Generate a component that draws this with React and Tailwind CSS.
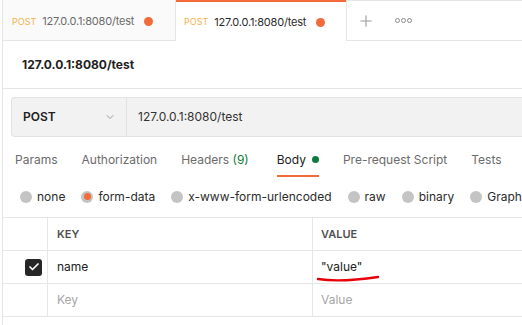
import { ChevronDown, Plus, Check } from "lucide-react";

const tabs = [
  { label: "Params" },
  { label: "Authorization" },
  { label: "Headers", count: "(9)" },
  { label: "Body", active: true },
  { label: "Pre-request Script" },
  { label: "Tests" },
];

const bodyTypes = [
  { label: "none" },
  { label: "form-data", checked: true },
  { label: "x-www-form-urlencoded" },
  { label: "raw" },
  { label: "binary" },
  { label: "GraphQL" },
];

function Radio({ checked }) {
  return (
    <span className="flex h-[12px] w-[12px] shrink-0 items-center justify-center rounded-full bg-[#c4c4c4]">
      {checked && <span className="h-[7px] w-[7px] rounded-full bg-[#f26b3a]" />}
    </span>
  );
}

function RequestTab({ active }) {
  return (
    <div
      className={`flex h-full items-center ${
        active
          ? "w-[170px] border-t-2 border-[#f26b3a] bg-white pt-[1px] pl-[8px]"
          : "w-[173px] border-r border-b border-[#e6e6e6] bg-[#fafafa] pt-[3px] pl-[9px]"
      }`}
    >
      <span className="text-[9px] text-[#f5b14c]">POST</span>
      <span
        className={`ml-[6px] text-[11px] tracking-[-0.2px] ${
          active ? "text-[#2b2b2b]" : "text-[#6b6b6b]"
        }`}
      >
        127.0.0.1:8080/test
      </span>
      <span className="ml-[10px] h-[9px] w-[9px] rounded-full bg-[#f26b3a]" />
    </div>
  );
}

export default function App() {
  return (
    <div
      className="relative h-[325px] w-[522px] overflow-hidden bg-white"
      style={{ fontFamily: "Inter, 'Noto Sans', sans-serif" }}
    >
      <div className="ml-[2px] h-full border-l border-[#e6e6e6]">
        {/* open request tabs */}
        <div className="flex h-[41px]">
          <RequestTab />
          <RequestTab active />
          <div className="flex flex-1 items-center gap-[20px] border-y border-l border-[#e6e6e6] pl-[10px]">
            <Plus className="h-[18px] w-[18px] text-[#9a9a9a]" strokeWidth={1.5} />
            <span className="flex gap-[1px]">
              <span className="h-[5px] w-[5px] rounded-full border border-[#8a8a8a]" />
              <span className="h-[5px] w-[5px] rounded-full border border-[#8a8a8a]" />
              <span className="h-[5px] w-[5px] rounded-full border border-[#8a8a8a]" />
            </span>
          </div>
        </div>

        {/* request name */}
        <div className="flex h-[48px] items-center border-b border-[#e6e6e6] pl-[19px]">
          <span className="text-[12px] font-bold text-[#212121]">127.0.0.1:8080/test</span>
        </div>

        {/* url bar */}
        <div className="mt-[8px] ml-[8px] flex h-[40px] rounded-l-[4px] border border-r-0 border-[#e2e2e2] bg-[#f2f2f2]">
          <div className="flex w-[115px] items-center justify-between border-r border-[#e2e2e2] pr-[10px] pl-[11px]">
            <span className="text-[12px] font-semibold text-[#212121]">POST</span>
            <ChevronDown className="h-[12px] w-[12px] text-[#808080]" strokeWidth={1.5} />
          </div>
          <div className="flex items-center pl-[11px] text-[12px] text-[#333333]">127.0.0.1:8080/test</div>
        </div>

        {/* request tabs */}
        <div className="mt-[6px] flex h-[33px] items-stretch gap-[24px] pl-[12px]">
          {tabs.map((t) => (
            <div key={t.label} className={`relative flex items-center ${t.active ? "ml-[4px]" : ""}`}>
              <span className={`text-[12px] ${t.active ? "text-[#212121]" : "text-[#6b6b6b]"}`}>
                {t.label}
                {t.count && <span className="text-[#0f7b3b]"> {t.count}</span>}
              </span>
              {t.active && (
                <>
                  <span className="ml-[6px] h-[7px] w-[7px] rounded-full bg-[#0f7b3b]" />
                  <span className="absolute bottom-[-1px] left-0 h-[2px] w-[42px] bg-[#f26b3a]" />
                </>
              )}
            </div>
          ))}
        </div>

        {/* body type */}
        <div className="flex h-[41px] items-center pl-[17px] text-[12px] text-[#2b2b2b]">
          {bodyTypes.map((b) => (
            <div key={b.label} className="mr-[16px] flex shrink-0 items-center gap-[5px]">
              <Radio checked={b.checked} />
              <span>{b.label}</span>
            </div>
          ))}
        </div>

        {/* params table */}
        <div className="border-t border-[#e6e6e6] text-[12px]">
          <div className="flex h-[33px] border-b border-[#e6e6e6]">
            <div className="w-[45px] border-r border-[#e6e6e6]" />
            <div className="flex w-[265px] items-center border-r border-[#e6e6e6] pl-[9px] text-[11px] font-semibold text-[#505050]">
              KEY
            </div>
            <div className="flex items-center pl-[8px] text-[11px] font-semibold text-[#505050]">VALUE</div>
          </div>
          <div className="flex h-[33px] border-b border-[#e6e6e6]">
            <div className="flex w-[45px] items-center justify-end border-r border-[#e6e6e6] pr-[5px]">
              <span className="flex h-[17px] w-[17px] items-center justify-center rounded-[3px] bg-[#262626]">
                <Check className="h-[12px] w-[12px] text-white" strokeWidth={3.5} />
              </span>
            </div>
            <div className="flex w-[265px] items-center border-r border-[#e6e6e6] pl-[9px] text-[#212121]">name</div>
            <div className="flex items-center pl-[8px] text-[#212121]">"value"</div>
          </div>
          <div className="flex h-[33px] border-b border-[#e6e6e6]">
            <div className="w-[45px] border-r border-[#e6e6e6]" />
            <div className="flex w-[265px] items-center border-r border-[#e6e6e6] pl-[9px] text-[#a6a6a6]">Key</div>
            <div className="flex items-center pl-[8px] text-[#a6a6a6]">Value</div>
          </div>
        </div>
      </div>

      {/* hand-drawn red underline */}
      <svg className="pointer-events-none absolute top-0 left-0" width="522" height="325">
        <path d="M318 279 Q340 282.5 378 277" fill="none" stroke="#e8000b" strokeWidth="2.4" strokeLinecap="round" />
      </svg>
    </div>
  );
}
